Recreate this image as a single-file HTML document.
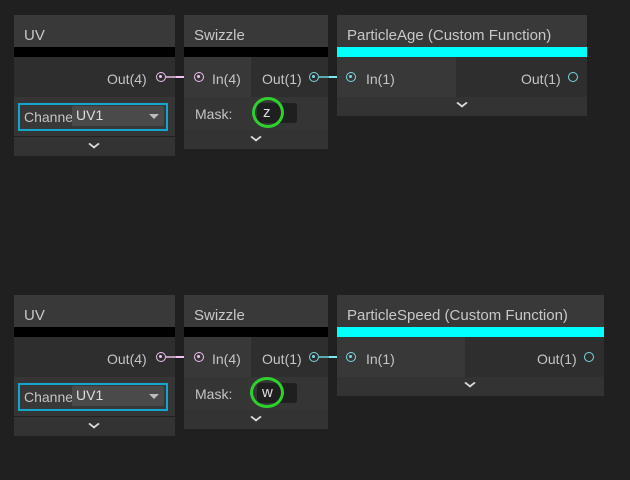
<!DOCTYPE html>
<html><head><style>
*{margin:0;padding:0;box-sizing:border-box}
body{width:630px;height:462px;background:#202020;position:relative;overflow:hidden;font-family:"Liberation Sans",sans-serif;font-size:14px;color:#c4c4c4}
.a{position:absolute}
.set{position:absolute;left:0;width:630px;height:200px}
.hdr{background:#393939;font-size:15px;color:#c8c8c8;padding:12px 0 0 10px}
.port{position:absolute;width:10px;height:10px;border-radius:50%;border:1.5px solid}
.port i{position:absolute;left:2px;top:2px;width:3px;height:3px;border-radius:50%}
.chev{position:absolute;width:8px;height:8px;border-right:2.5px solid #ddd;border-bottom:2.5px solid #ddd;transform:scaleY(0.8) rotate(45deg)}
</style></head><body>

<div class="set" style="top:0">
<div class="a hdr" style="left:14px;top:15px;width:161px;height:32px">UV</div>
<div class="a" style="left:14px;top:47px;width:161px;height:10px;background:#000"></div>
<div class="a" style="left:14px;top:57px;width:161px;height:40px;background:#2e2e2e"></div>
<div class="a" style="left:107px;top:71px">Out(4)</div>
<div class="port" style="left:156px;top:72px;border-color:#f0c0f0"><i style="background:#f0c0f0"></i></div>
<div class="a" style="left:14px;top:97px;width:161px;height:39px;background:#353535"></div>
<div class="a" style="left:18px;top:103px;width:150px;height:28px;border:2px solid #14a6cc;background:#383838"></div>
<div class="a" style="left:24px;top:109px;width:48px;overflow:hidden;white-space:nowrap">Channel</div>
<div class="a" style="left:72px;top:106px;width:92px;height:20px;background:#4a4a4a;border-radius:2px;padding:1px 0 0 4px;color:#ddd">UV1</div>
<div class="a" style="left:149px;top:114px;width:0;height:0;border-left:5px solid transparent;border-right:5px solid transparent;border-top:5px solid #bbb"></div>
<div class="a" style="left:14px;top:137px;width:161px;height:19px;background:#333"></div>
<div class="chev" style="left:90px;top:140px"></div>
<div class="a" style="left:166px;top:76px;width:28px;height:2px;background:#b89ab8"></div>
<div class="a" style="left:176px;top:76px;width:8px;height:2px;background:#f0c0f0"></div>
<div class="a hdr" style="left:184px;top:15px;width:144px;height:32px">Swizzle</div>
<div class="a" style="left:184px;top:47px;width:144px;height:10px;background:#000"></div>
<div class="a" style="left:184px;top:57px;width:67px;height:40px;background:#383838"></div>
<div class="a" style="left:251px;top:57px;width:77px;height:40px;background:#2e2e2e"></div>
<div class="port" style="left:194px;top:72px;border-color:#f0c0f0"><i style="background:#f0c0f0"></i></div>
<div class="a" style="left:212px;top:71px">In(4)</div>
<div class="a" style="left:262px;top:71px">Out(1)</div>
<div class="port" style="left:309px;top:72px;border-color:#7ad8e0"><i style="background:#7ad8e0"></i></div>
<div class="a" style="left:184px;top:97px;width:144px;height:33px;background:#353535"></div>
<div class="a" style="left:195px;top:106px">Mask:</div>
<div class="a" style="left:257px;top:103px;width:40px;height:20px;background:#1f1f1f;border-radius:3px"></div>
<div class="a" style="left:263px;top:104px;color:#ddd;font-size:15px">z</div>
<div class="a" style="left:252px;top:97px;width:32px;height:31px;border:3px solid #2ed02e;border-radius:50%"></div>
<div class="a" style="left:184px;top:130px;width:144px;height:19px;background:#333"></div>
<div class="chev" style="left:252px;top:133px"></div>
<div class="a" style="left:319px;top:76px;width:28px;height:2px;background:#5aaab0"></div>
<div class="a" style="left:329px;top:76px;width:8px;height:2px;background:#7ae8f0"></div>
<div class="a hdr" style="left:337px;top:15px;width:250px;height:32px">ParticleAge (Custom Function)</div>
<div class="a" style="left:337px;top:47px;width:250px;height:10px;background:#00ffff"></div>
<div class="a" style="left:337px;top:57px;width:119px;height:40px;background:#383838"></div>
<div class="a" style="left:456px;top:57px;width:131px;height:40px;background:#2e2e2e"></div>
<div class="port" style="left:346px;top:72px;border-color:#7ad8e0"><i style="background:#7ad8e0"></i></div>
<div class="a" style="left:366px;top:71px">In(1)</div>
<div class="a" style="left:521px;top:71px">Out(1)</div>
<div class="port" style="left:568px;top:72px;border-color:#7ad8e0"></div>
<div class="a" style="left:337px;top:97px;width:250px;height:19px;background:#333"></div>
<div class="chev" style="left:458px;top:99px"></div>
</div>

<div class="set" style="top:280px">
<div class="a hdr" style="left:14px;top:15px;width:161px;height:32px">UV</div>
<div class="a" style="left:14px;top:47px;width:161px;height:10px;background:#000"></div>
<div class="a" style="left:14px;top:57px;width:161px;height:40px;background:#2e2e2e"></div>
<div class="a" style="left:107px;top:71px">Out(4)</div>
<div class="port" style="left:156px;top:72px;border-color:#f0c0f0"><i style="background:#f0c0f0"></i></div>
<div class="a" style="left:14px;top:97px;width:161px;height:39px;background:#353535"></div>
<div class="a" style="left:18px;top:103px;width:150px;height:28px;border:2px solid #14a6cc;background:#383838"></div>
<div class="a" style="left:24px;top:109px;width:48px;overflow:hidden;white-space:nowrap">Channel</div>
<div class="a" style="left:72px;top:106px;width:92px;height:20px;background:#4a4a4a;border-radius:2px;padding:1px 0 0 4px;color:#ddd">UV1</div>
<div class="a" style="left:149px;top:114px;width:0;height:0;border-left:5px solid transparent;border-right:5px solid transparent;border-top:5px solid #bbb"></div>
<div class="a" style="left:14px;top:137px;width:161px;height:19px;background:#333"></div>
<div class="chev" style="left:90px;top:140px"></div>
<div class="a" style="left:166px;top:76px;width:28px;height:2px;background:#b89ab8"></div>
<div class="a" style="left:176px;top:76px;width:8px;height:2px;background:#f0c0f0"></div>
<div class="a hdr" style="left:184px;top:15px;width:144px;height:32px">Swizzle</div>
<div class="a" style="left:184px;top:47px;width:144px;height:10px;background:#000"></div>
<div class="a" style="left:184px;top:57px;width:67px;height:40px;background:#383838"></div>
<div class="a" style="left:251px;top:57px;width:77px;height:40px;background:#2e2e2e"></div>
<div class="port" style="left:194px;top:72px;border-color:#f0c0f0"><i style="background:#f0c0f0"></i></div>
<div class="a" style="left:212px;top:71px">In(4)</div>
<div class="a" style="left:262px;top:71px">Out(1)</div>
<div class="port" style="left:309px;top:72px;border-color:#7ad8e0"><i style="background:#7ad8e0"></i></div>
<div class="a" style="left:184px;top:97px;width:144px;height:33px;background:#353535"></div>
<div class="a" style="left:195px;top:106px">Mask:</div>
<div class="a" style="left:257px;top:103px;width:40px;height:20px;background:#1f1f1f;border-radius:3px"></div>
<div class="a" style="left:262px;top:104px;color:#ddd;font-size:15px">w</div>
<div class="a" style="left:250px;top:97px;width:34px;height:31px;border:3px solid #2ed02e;border-radius:50%"></div>
<div class="a" style="left:184px;top:130px;width:144px;height:19px;background:#333"></div>
<div class="chev" style="left:252px;top:133px"></div>
<div class="a" style="left:319px;top:76px;width:28px;height:2px;background:#5aaab0"></div>
<div class="a" style="left:329px;top:76px;width:8px;height:2px;background:#7ae8f0"></div>
<div class="a hdr" style="left:337px;top:15px;width:267px;height:32px">ParticleSpeed (Custom Function)</div>
<div class="a" style="left:337px;top:47px;width:267px;height:10px;background:#00ffff"></div>
<div class="a" style="left:337px;top:57px;width:128px;height:40px;background:#383838"></div>
<div class="a" style="left:465px;top:57px;width:139px;height:40px;background:#2e2e2e"></div>
<div class="port" style="left:346px;top:72px;border-color:#7ad8e0"><i style="background:#7ad8e0"></i></div>
<div class="a" style="left:366px;top:71px">In(1)</div>
<div class="a" style="left:537px;top:71px">Out(1)</div>
<div class="port" style="left:584px;top:72px;border-color:#7ad8e0"></div>
<div class="a" style="left:337px;top:97px;width:267px;height:19px;background:#333"></div>
<div class="chev" style="left:466px;top:99px"></div>
</div>
</body></html>
